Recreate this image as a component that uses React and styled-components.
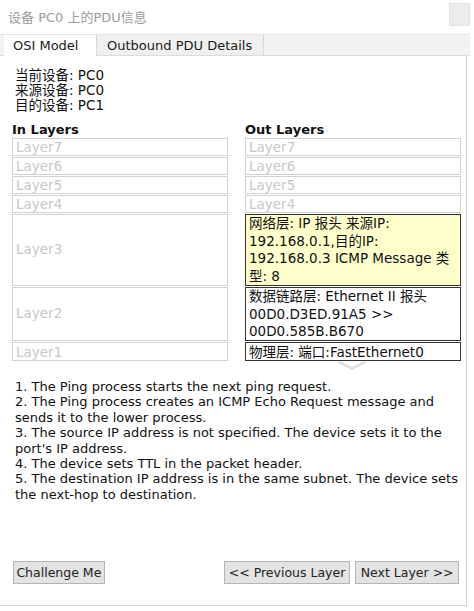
import React from 'react';
import styled, { createGlobalStyle } from 'styled-components';

const GlobalStyle = createGlobalStyle`
  html, body {
    margin: 0;
    padding: 0;
    background: #ffffff;
  }
  body {
    font-family: "DejaVu Sans", "Noto Sans CJK SC", sans-serif;
  }
`;

const Window = styled.div`
  width: 474px;
  height: 611px;
  display: flex;
  flex-direction: column;
  background: #ffffff;
  overflow: hidden;
`;

const TitleBar = styled.div`
  height: 34px;
  display: flex;
  align-items: center;
  justify-content: space-between;
  padding: 0 4px 0 8px;
  box-sizing: border-box;
`;

const Title = styled.span`
  font-size: 13px;
  color: #9c9c9c;
  margin-top: -2px;
`;

const CloseBox = styled.div`
  width: 19px;
  height: 21px;
  background: #ececec;
  border: 1px solid #e2e2e2;
  margin-top: -6px;
`;

const TabBar = styled.div`
  height: 22px;
  display: flex;
  align-items: stretch;
  width: 470px;
  background: #f2f2f2;
  border-top: 1px solid #e4e4e4;
  border-bottom: 1px solid #dcdcdc;
  box-sizing: border-box;
`;

const Tab = styled.div`
  display: flex;
  align-items: center;
  padding: 0 ${p => (p.$active ? '9px' : '10px')};
  font-size: 13px;
  color: #1a1a1a;
  background: ${p => (p.$active ? '#ffffff' : '#f0f0f0')};
  border-right: 1px solid #d8d8d8;
  margin-left: ${p => (p.$active ? '4px' : '0')};
  margin-bottom: ${p => (p.$active ? '-1px' : '0')};
  width: ${p => p.$w}px;
  box-sizing: border-box;
`;

const Panel = styled.div`
  flex: 1;
  width: 467px;
  display: flex;
  flex-direction: column;
  border-right: 1px solid #d4d4d4;
  border-bottom: 1px solid #d4d4d4;
  box-sizing: border-box;
  margin-bottom: 5px;
  padding: 12px 0 21px 0;
`;

const DeviceInfo = styled.div`
  padding-left: 15px;
  font-size: 13.5px;
  line-height: 15px;
  color: #111;
`;

const LayerGrid = styled.div`
  margin: 8px 0 0 12px;
  display: grid;
  grid-template-columns: 216px 216px;
  column-gap: 17px;
  row-gap: 1px;
`;

const ColumnHead = styled.div`
  font-size: 13px;
  font-weight: bold;
  color: #111;
  height: 16px;
  line-height: 17px;
`;

const LayerCell = styled.div`
  box-sizing: border-box;
  height: ${p => p.$h}px;
  border: 1px solid ${p => (p.$active ? '#333333' : '#d2d2d2')};
  background: ${p => (p.$hl ? '#ffffcc' : '#ffffff')};
  color: ${p => (p.$active ? '#111111' : '#c8c8c8')};
  font-size: 13.5px;
  line-height: ${p => (p.$lines > 1 ? '17.6px' : '16px')};
  padding: 0 3px;
  display: flex;
  align-items: ${p => (p.$active && p.$lines > 1 ? 'flex-start' : 'center')};
  white-space: pre-line;
  overflow: hidden;
`;

const ArrowRow = styled.div`
  display: flex;
  justify-content: flex-end;
  padding-right: 100px;
  height: 12px;
`;

const Description = styled.div`
  margin-top: 6px;
  padding-left: 15px;
  padding-right: 8px;
  font-size: 13px;
  line-height: 15.4px;
  color: #111;
`;

const Spacer = styled.div`
  flex: 1;
`;

const ButtonRow = styled.div`
  display: flex;
  align-items: center;
  padding: 0 7px 0 13px;
`;

const Button = styled.button`
  height: 23px;
  padding: 0;
  font-family: "DejaVu Sans", sans-serif;
  font-size: 12.5px;
  white-space: nowrap;
  color: #222;
  background: #e3e3e3;
  border: 1px solid #b4b4b4;
  border-radius: 0;
  margin-left: ${p => p.$ml || 0}px;
  width: ${p => p.$w}px;
`;

const layers = [
  { n: 7, lines: 1, h: 18 },
  { n: 6, lines: 1, h: 18 },
  { n: 5, lines: 1, h: 18 },
  { n: 4, lines: 1, h: 18 },
  {
    n: 3,
    lines: 4,
    h: 72,
    out: '网络层: IP 报头 来源IP:\n192.168.0.1,目的IP:\n192.168.0.3 ICMP Message 类\n型: 8',
    hl: true,
  },
  {
    n: 2,
    lines: 3,
    h: 54,
    out: '数据链路层: Ethernet II 报头\n00D0.D3ED.91A5 >>\n00D0.585B.B670',
  },
  { n: 1, lines: 1, h: 19, out: '物理层: 端口:FastEthernet0' },
];

const steps = [
  '1. The Ping process starts the next ping request.',
  '2. The Ping process creates an ICMP Echo Request message and sends it to the lower process.',
  "3. The source IP address is not specified. The device sets it to the port's IP address.",
  '4. The device sets TTL in the packet header.',
  '5. The destination IP address is in the same subnet. The device sets the next-hop to destination.',
];

export default function App() {
  return (
    <Window>
      <GlobalStyle />
      <TitleBar>
        <Title>设备 PC0 上的PDU信息</Title>
        <CloseBox />
      </TitleBar>
      <TabBar>
        <Tab $active $w={93}>OSI Model</Tab>
        <Tab $w={167}>Outbound PDU Details</Tab>
      </TabBar>
      <Panel>
        <DeviceInfo>
          <div>当前设备: PC0</div>
          <div>来源设备: PC0</div>
          <div>目的设备: PC1</div>
        </DeviceInfo>
        <LayerGrid>
          <ColumnHead>In Layers</ColumnHead>
          <ColumnHead>Out Layers</ColumnHead>
          {layers.map(l => (
            <React.Fragment key={l.n}>
              <LayerCell $h={l.h} $lines={l.lines}>Layer{l.n}</LayerCell>
              {l.out ? (
                <LayerCell $h={l.h} $lines={l.lines} $active $hl={l.hl}>
                  {l.out}
                </LayerCell>
              ) : (
                <LayerCell $h={l.h} $lines={l.lines}>Layer{l.n}</LayerCell>
              )}
            </React.Fragment>
          ))}
        </LayerGrid>
        <ArrowRow>
          <svg width="28" height="9" viewBox="0 0 28 9">
            <path d="M1 1 L14 7.5 L27 1" fill="none" stroke="#dcdcdc" strokeWidth="2.5" />
          </svg>
        </ArrowRow>
        <Description>
          {steps.map((s, i) => (
            <div key={i}>{s}</div>
          ))}
        </Description>
        <Spacer />
        <ButtonRow>
          <Button $w={92}>Challenge Me</Button>
          <Button $w={127} $ml={119}>&lt;&lt; Previous Layer</Button>
          <Button $w={104} $ml={5}>Next Layer &gt;&gt;</Button>
        </ButtonRow>
      </Panel>
    </Window>
  );
}
